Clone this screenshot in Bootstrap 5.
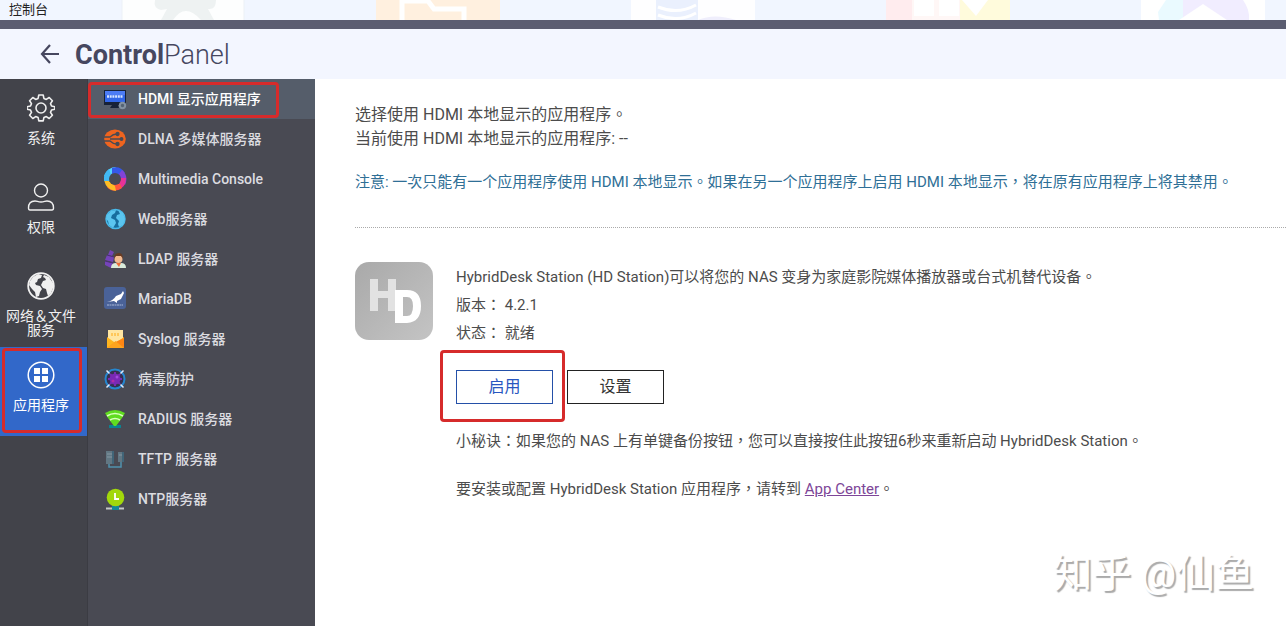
<!DOCTYPE html>
<html lang="zh-CN">
<head>
<meta charset="utf-8">
<meta name="viewport" content="width=device-width, initial-scale=1">
<title>ControlPanel</title>
<link href="https://cdn.jsdelivr.net/npm/bootstrap@5.3.0/dist/css/bootstrap.min.css" rel="stylesheet">
<style>
  body { font-family: Roboto, "Noto Sans CJK TC", sans-serif; font-size: 15px; line-height: 24px; color: #4c4c4c; background: #fff; }
  .desk-strip { height: 20px; background: #f1f6ff; }
  .desk-label { width: 121px; padding-left: 9px; font: 13px/19px "Liberation Sans", "Noto Sans CJK SC", sans-serif; color: #222; }
  .desk-icons { gap: 131px; min-width: 0; overflow: hidden; }
  .window-edge { height: 9px; background: #5b5d71; }
  .title-bar { height: 50px; background: #f3f6ff; padding-left: 40px; gap: 15px; color: #46475f; }
  .title-bar h1 { font-size: 27px; line-height: 48px; padding-top: 2px; font-weight: 700; }
  .title-bar h1 span { font-weight: 300; }
  .rail { width: 88px; padding-top: 1px; background: #42434a; border-right: 1px solid #3b3c43; font: 14px/14px Roboto, "Noto Sans CJK SC", sans-serif; }
  .rail a { height: 89px; padding: 14px 5px 0 0; gap: 9px; color: #f0f0f0; }
  .rail a.active { background: #3268c9; color: #fff; }
  .submenu { width: 227px; background: #494a53; font: 500 14px/20px Roboto, "Noto Sans CJK SC", sans-serif; }
  .submenu a { height: 40px; padding-left: 15px; gap: 11px; color: #dcdce0; }
  .submenu a.active { background: #555d6a; color: #fff; }
  .marker { border: 3px solid #d62b2b; border-radius: 4px; pointer-events: none; }
  .marker-menu { inset: 3px 36px 1px 0; }
  .marker-rail { inset: 1px 5px 3px 2px; }
  .marker-button { inset: -20px -12px -18px -16px; }
  .content { padding: 24px 0 0 40px; }
  .intro { font-size: 16px; }
  .note { color: #2f6f96; margin: 19px 0 33px; }
  .divider { border-top: 1px dotted #aaa; }
  .app-row { padding-top: 34px; gap: 23px; }
  .app-text { padding-top: 3px; }
  .app-actions { gap: 14px; margin: 25px 0; }
  .btn-flat { width: 97px; height: 34px; padding: 0; font-size: 16px; line-height: 30px; border-radius: 0; border: 1px solid #222; background: #fff; color: #333; }
  .btn-flat.main-action { border-color: #2450a8; color: #2856c0; }
  .app-text a { color: #7d4698; }
  .watermark { right: 32px; bottom: 24px; font-size: 39px; line-height: 56px; color: #fff; text-shadow: 2px 2px 1px #aaa; }
</style>
</head>
<body class="d-flex flex-column min-vh-100 position-relative overflow-x-hidden">

<div class="desk-strip d-flex">
  <div class="desk-label flex-shrink-0">控制台</div>
  <div class="desk-icons d-flex" aria-hidden="true">
    <svg class="flex-shrink-0" width="124" height="20"><path fill="#fdfefe" stroke="#ecf1f6" d="M1-1h122v22H1z"/><path fill="#eef2f2" d="M34 0q-2 8 6 10l6-1-6 11h12q12-18 28 0h13l-6-11q8 1 8-9Z"/></svg>
    <svg class="flex-shrink-0" width="124" height="20"><path fill="#fff0df" d="M0 0h124v20H0z"/><path fill="none" stroke="#fff" stroke-width="5" d="M26 20V0M26 1h26l6 8h30v11"/></svg>
    <svg class="flex-shrink-0" width="124" height="20"><path fill="#fefeff" d="M0 0h124v20H0z"/><path fill="#eaf0fd" d="M25 0h42v20H25z"/><path fill="none" stroke="#fff" stroke-width="3" d="M27 7q20 8 38-2M27 15q20 8 38-2"/><path fill="#efeefc" d="M67 20q16-7 38 0z"/></svg>
    <svg class="flex-shrink-0" width="124" height="20"><path fill="#ffecee" d="M0 0h26v20H0z"/><path fill="#fff7f6" d="M26 0h48v20H26z"/><path fill="#fffbdc" d="M74 0h50v20H74z"/><path fill="#fff" d="M28 0h20v16H28zM53 0h20v16H53zM76 0h26L90 16z"/></svg>
    <svg class="flex-shrink-0" width="124" height="20"><path fill="#fff" d="M0 0h124v20H0z"/><path fill="#eafaff" d="M17 12 25 0h25v20H18z"/><path fill="#f1edff" d="M42 0h60q7 10 6 20H42z"/><path fill="#fff" d="m38 20 24-16 24 16z"/></svg>
  </div>
</div>
<div class="window-edge"></div>

<header class="title-bar d-flex align-items-center">
  <a href="#" class="d-flex text-reset" aria-label="返回"><svg width="20" height="20" viewBox="0 0 20 20" fill="none" stroke="currentColor" stroke-width="2.200"><path d="M19 10H2M10 1 2 10l8 9"/></svg></a>
  <h1 class="mb-0">Control<span>Panel</span></h1>
</header>

<div class="d-flex flex-grow-1">
  <nav class="rail flex-shrink-0" aria-label="分类">
    <a href="#" class="d-flex flex-column align-items-center text-center text-decoration-none">
      <svg width="28" height="28" viewBox="0 0 28 28" fill="none" stroke="currentColor" stroke-width="1.6" stroke-linejoin="round"><circle cx="14" cy="14" r="5"/><path d="M11.8 1h4.400l.7 3.400 2.400 1 2.900-1.900 3.200 3.200-1.900 2.900 1 2.400 3.400.7v2.600l-3.400.7-1 2.400 1.900 2.900-3.200 3.200-2.900-1.900-2.400 1-.7 3.300h-4.400l-.7-3.300-2.400-1-2.900 1.900-3.200-3.200 1.900-2.900-1-2.400-3.400-.7v-2.600l3.400-.7 1-2.400-1.900-2.900 3.200-3.200 2.900 1.900 2.400-1z"/></svg>
      系统</a>
    <a href="#" class="d-flex flex-column align-items-center text-center text-decoration-none">
      <svg width="28" height="28" viewBox="0 0 28 28" fill="none" stroke="currentColor" stroke-width="1.4"><circle cx="14" cy="7.500" r="6.500"/><path d="M3 27q-1.500 0-1.500-2c0-4 2-7 6.500-7 2 0 3 1 6 1s4-1 6-1c4.500 0 6.500 3 6.500 7q0 2-1.500 2z"/></svg>
      权限</a>
    <a href="#" class="d-flex flex-column align-items-center text-center text-decoration-none">
      <svg width="28" height="28" viewBox="0 0 28 28"><circle cx="14" cy="14" r="12.800" fill="none" stroke="currentColor" stroke-width="1.800"/><path fill="currentColor" d="m3 9 3-4 5-3 4 1-1 3-3 1-1 3-2 1 1 2 4 1 2 3-2 3-1 4-3 1-1-5-3-3-3-4zM17 3l5 2 4 6v5l-2 5-3 3-1-3-1-4-3-1-2-3 2-4 3-1-1-2-2-1z"/></svg>
      网络＆文件<br>服务</a>
    <a href="#" class="active position-relative d-flex flex-column align-items-center text-center text-decoration-none" aria-current="page">
      <svg width="28" height="28" viewBox="0 0 28 28"><circle cx="14" cy="14" r="12.800" fill="none" stroke="currentColor" stroke-width="1.500"/><path fill="currentColor" d="M7 7h6v6H7zM15 7h6v6h-6zM7 15h6v6H7zM15 15h6v6h-6z"/></svg>
      应用程序<span class="marker marker-rail position-absolute"></span></a>
  </nav>

  <nav class="submenu flex-shrink-0" aria-label="应用程序">
    <a href="#" class="active position-relative d-flex align-items-center text-decoration-none" aria-current="page">
      <svg width="24" height="24" viewBox="0 0 24 24"><path fill="#172238" d="M1 3h22v15H1zM9 18h6l1 3H7z"/><path fill="#3267e8" d="M2 4h20v11H2z"/><path fill="#4c7cf5" d="M2 4h20v4H2z"/><path stroke="#d5e4ff" stroke-width="2.500" stroke-dasharray="2 .7" d="M4 9.500h16"/><circle cx="19.500" cy="18.500" r="2.700" fill="#546474" stroke="#8392a2" stroke-width="2"/></svg>
      HDMI 显示应用程序<span class="marker marker-menu position-absolute"></span></a>
    <a href="#" class="d-flex align-items-center text-decoration-none">
      <svg width="24" height="24" viewBox="0 0 24 24"><ellipse cx="12" cy="12" rx="10.800" ry="9.500" fill="#ee641f"/><g fill="#494a53" stroke="#494a53" stroke-width="1.300"><path fill="none" d="M1 10h6q3-3 7-3M7 12h11M1 14h6q3 3 7 3"/><circle cx="14.500" cy="7" r="1.500"/><circle cx="18.500" cy="12" r="1.300"/><circle cx="14.500" cy="17" r="1.500"/></g></svg>
      DLNA 多媒体服务器</a>
    <a href="#" class="d-flex align-items-center text-decoration-none">
      <svg width="24" height="24" viewBox="0 0 24 24"><path fill="#55d4ff" d="M1 9Q5 0 13 0L8 8l-1 5z"/><path fill="#3558e8" d="M9 1q8-3 13 5l-6 2-7-1z"/><path fill="#8144d8" d="M19 3q7 6 3 15l-5-5-1-6z"/><path fill="#e83296" d="M23 11q0 10-9 12l2-6 2-6z"/><path fill="#ff563c" d="M19 21q-9 6-15-1l7-4 6 1z"/><path fill="#ffbd24" d="M13 24Q1 22 1 10l6 5 5 4z"/><path fill="#41b9f5" d="M1 14Q0 6 6 2l2 6-1 6z"/><circle cx="12" cy="12" r="6" fill="#494a53"/></svg>
      Multimedia Console</a>
    <a href="#" class="d-flex align-items-center text-decoration-none">
      <svg width="24" height="24" viewBox="0 0 24 24"><circle cx="12.500" cy="12" r="9.500" fill="#176d9e" stroke="#48b9e9" stroke-width="1.500"/><path fill="#5bc5ef" d="m4 8 4-4 5-1-1 3-3 2-1 3 4 2 1 3-3 5-4-3-1-4-2-2zM15 3l5 3 2 6-2 6-4 2-1-3 1-3-3-3 1-3 3-1z"/></svg>
      Web服务器</a>
    <a href="#" class="d-flex align-items-center text-decoration-none">
      <svg width="24" height="24" viewBox="0 0 24 24"><path fill="#7544b9" d="m7 3 4 2-2 4-4-1zM4 8l7 2-1 5-8-2zM2 14l8 2-2 5-6-3z"/><path stroke="#493073" d="m4 8 7 2M2 14l8 2"/><path fill="#d9ebdb" d="M8 21q0-5 5-5h5q5 0 5 5z"/><circle cx="15.500" cy="12" r="4" fill="#f2ba91"/><path fill="#683c24" d="M11 12q0-6 5-6 4 0 4 6l-2-3h-5z"/><path fill="#eb6b39" d="m13 16 3 4 2-4z"/></svg>
      LDAP 服务器</a>
    <a href="#" class="d-flex align-items-center text-decoration-none">
      <svg width="24" height="24" viewBox="0 0 24 24"><rect x="1" width="22" height="22" rx="3" fill="#4a6298"/><path fill="#fff" d="M4 15q6-1 9-6l5-2 2-3 1 2q-2 4-3 6l-4 2v2l-3-2z"/><path stroke="#aab9d8" stroke-dasharray="2 .5" d="M4 18h16"/></svg>
      MariaDB</a>
    <a href="#" class="d-flex align-items-center text-decoration-none">
      <svg width="24" height="24" viewBox="0 0 24 24"><path fill="#ffe6a2" d="M5 3h15v12H5z"/><path stroke="#ffc85a" stroke-width="3" stroke-dasharray="2 1" d="M8 7.500h9"/><path fill="#ffb51e" d="m4 10 8.500 6 8.500-6v11H4z"/><path fill="#ff8614" d="m4 21 8.500-6L21 11v10z"/><path fill="#ffa41e" d="m4 21 8.500-7 8.500 7z"/></svg>
      Syslog 服务器</a>
    <a href="#" class="d-flex align-items-center text-decoration-none">
      <svg width="24" height="24" viewBox="0 0 24 24"><circle cx="12" cy="12" r="9.500" fill="#35314e" stroke="#2687cf" stroke-width="2"/><path stroke="#dceaff" stroke-width="1.500" d="m3.500 3.500 3 3M20.500 3.500l-3 3M3.500 20.500l3-3M20.500 20.500l-3-3"/><circle cx="12" cy="12" r="5.500" fill="#792ab5"/><path stroke="#792ab5" stroke-width="2" d="M12 5v14M5 12h14M7 7l10 10M17 7 7 17"/><circle cx="14" cy="10" r="1.500" fill="#a34ae0"/><circle cx="10" cy="14" r="1.500" fill="#b02daa"/></svg>
      病毒防护</a>
    <a href="#" class="d-flex align-items-center text-decoration-none">
      <svg width="24" height="24" viewBox="0 0 24 24"><path fill="#0b8290" d="M6 18h12v3H6z"/><path fill="#60dc20" d="M2 6q10-6 20 0l-3 5-6 8h-2l-6-8z"/><path fill="none" stroke="#d9ffbd" stroke-width="1.500" d="M4 9q8-5 16 0M7 13q5-3 10 0"/></svg>
      RADIUS 服务器</a>
    <a href="#" class="d-flex align-items-center text-decoration-none">
      <svg width="24" height="24" viewBox="0 0 24 24"><path fill="#627783" d="M3 4h8v13H3zM15 5h6v10h-6z"/><path stroke="#8498a2" d="M4 7h6M4 10h6M16 8h4"/><path fill="#416578" d="M9 4h2v13H9zM19 5h2v10h-2z"/><path fill="none" stroke="#5092af" stroke-width="1.500" d="M6 17v3h12v-5"/></svg>
      TFTP 服务器</a>
    <a href="#" class="d-flex align-items-center text-decoration-none">
      <svg width="24" height="24" viewBox="0 0 24 24"><path stroke="#c5c8c8" stroke-width="2" d="M3 21.500h18"/><path fill="#148996" d="M9 18h7v5H9z"/><circle cx="12.500" cy="10.500" r="8.800" fill="#a2d80b"/><path fill="none" stroke="#fff" stroke-width="1.800" d="M12 6v6h4"/></svg>
      NTP服务器</a>
  </nav>

  <main class="content flex-grow-1" lang="zh-TW">
    <p class="intro m-0">选择使用 HDMI 本地显示的应用程序。<br>当前使用 HDMI 本地显示的应用程序: --</p>
    <p class="note">注意: 一次只能有一个应用程序使用 HDMI 本地显示。如果在另一个应用程序上启用 HDMI 本地显示，将在原有应用程序上将其禁用。</p>
    <div class="divider"></div>
    <section class="app-row d-flex align-items-start">
      <svg class="flex-shrink-0" width="78" height="78" viewBox="0 0 78 78" role="img" aria-label="HD">
        <defs><linearGradient id="tile" x1="0" y1="0" x2="1" y2="1"><stop stop-color="#a9a9a9"/><stop offset="1" stop-color="#c4c4c4"/></linearGradient></defs>
        <rect width="78" height="78" rx="14" fill="url(#tile)"/>
        <path fill="#e2e2e2" d="M15 17h8v12h10V17h8v32h-8V36H23v13h-8z"/>
        <path fill="#fff" fill-rule="evenodd" d="M40 28h12q14 0 14 16t-14 17H40zm8 7v19h4q6 0 6-10 0-9-6-9z"/>
      </svg>
      <div class="app-text">
        <p class="m-0">HybridDesk Station (HD Station)可以将您的 NAS 变身为家庭影院媒体播放器或台式机替代设备。</p>
        <p class="mt-1 mb-0">版本： 4.2.1</p>
        <p class="mt-1 mb-0">状态： 就绪</p>
        <div class="app-actions d-flex">
          <div class="position-relative"><button type="button" class="btn btn-flat main-action d-block">启用</button><span class="marker marker-button position-absolute"></span></div>
          <button type="button" class="btn btn-flat">设置</button>
        </div>
        <p class="mb-4">小秘诀：如果您的 NAS 上有单键备份按钮，您可以直接按住此按钮6秒来重新启动 HybridDesk Station。</p>
        <p class="m-0">要安装或配置 HybridDesk Station 应用程序，请转到 <a href="#">App Center</a>。</p>
      </div>
    </section>
  </main>
</div>
<div class="watermark position-absolute">知乎 @仙鱼</div>
<script src="https://cdn.jsdelivr.net/npm/bootstrap@5.3.0/dist/js/bootstrap.bundle.min.js"></script>
</body>
</html>
